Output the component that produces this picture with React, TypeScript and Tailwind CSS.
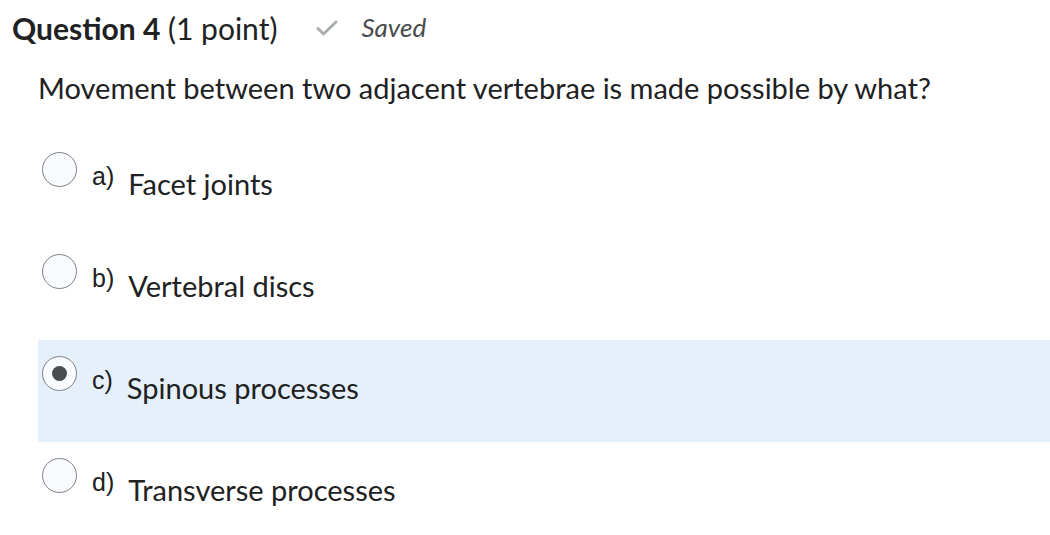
import React, { useState } from 'react';

const options = [
  { id: 'a', label: 'a)', text: 'Facet joints' },
  { id: 'b', label: 'b)', text: 'Vertebral discs' },
  { id: 'c', label: 'c)', text: 'Spinous processes' },
  { id: 'd', label: 'd)', text: 'Transverse processes' },
];

const CheckIcon = () => (
  <svg width="22" height="16" viewBox="0 0 22 16" fill="none">
    <path d="M2 8.5l5.5 5.5L20 2" stroke="#a8adb0" strokeWidth="3" strokeLinecap="round" strokeLinejoin="round" />
  </svg>
);

export default function App() {
  const [selected, setSelected] = useState('c');

  return (
    <div className="min-h-screen bg-white text-[#202122]" style={{ fontFamily: 'Lato, "Noto Sans", sans-serif' }}>
      <div className="flex items-center pl-[12px] pt-[8px]">
        <h2 className="text-[30px] leading-[36px]">
          <span className="font-bold">Question 4</span> (1 point)
        </h2>
        <div className="ml-[39px] flex items-center">
          <CheckIcon />
          <span className="ml-[23px] text-[26px] italic text-[#494c4e]">Saved</span>
        </div>
      </div>

      <p className="mt-[23px] pl-[38px] text-[29px] leading-[36px]">
        Movement between two adjacent vertebrae is made possible by what?
      </p>

      <div className="mt-[30px] pl-[38px]">
        {options.map((opt) => {
          const isSel = selected === opt.id;
          return (
            <label
              key={opt.id}
              onClick={() => setSelected(opt.id)}
              className={`flex h-[102px] cursor-pointer items-start pl-1 pt-4 ${isSel ? 'bg-[#e6f0fb]' : ''}`}
            >
              <span className="flex h-[35px] w-[35px] shrink-0 items-center justify-center rounded-full border border-[#7c8185] bg-[#f9fbff]">
                {isSel && <span className="h-[15px] w-[15px] rounded-full bg-[#494c4e]" />}
              </span>
              <span
                className="ml-[15px] mt-[9px] text-[25px] leading-[30px]"
                style={{ fontFamily: '"Liberation Sans", Arial, sans-serif' }}
              >
                {opt.label}
              </span>
              <span className="ml-[14px] mt-[14px] text-[29px] leading-[36px]">{opt.text}</span>
            </label>
          );
        })}
      </div>
    </div>
  );
}
